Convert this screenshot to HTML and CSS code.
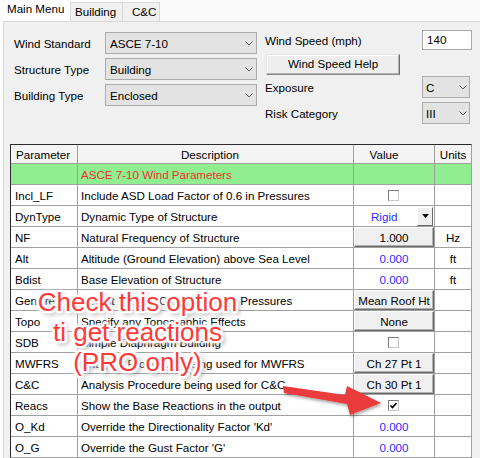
FILE: index.html
```html
<!DOCTYPE html>
<html>
<head>
<meta charset="utf-8">
<link rel="stylesheet" href="styles.css">
</head>
<body>
<div class="tabs">
  <div class="tab active">Main Menu</div>
  <div class="tab tab-b">Building</div>
  <div class="tab tab-c">C&amp;C</div>
</div>
<div class="panel">
  <div class="form">
    <div class="form-left">
      <div class="frow"><span class="flabel">Wind Standard</span><div class="combo wide"><span>ASCE 7-10</span><svg class="chev" width="8" height="5" viewBox="0 0 8 5"><polyline points="0.5,0.5 4,4 7.5,0.5" fill="none" stroke="#606060" stroke-width="1"/></svg></div></div>
      <div class="frow"><span class="flabel">Structure Type</span><div class="combo wide"><span>Building</span><svg class="chev" width="8" height="5" viewBox="0 0 8 5"><polyline points="0.5,0.5 4,4 7.5,0.5" fill="none" stroke="#606060" stroke-width="1"/></svg></div></div>
      <div class="frow"><span class="flabel">Building Type</span><div class="combo wide"><span>Enclosed</span><svg class="chev" width="8" height="5" viewBox="0 0 8 5"><polyline points="0.5,0.5 4,4 7.5,0.5" fill="none" stroke="#606060" stroke-width="1"/></svg></div></div>
    </div>
    <div class="form-right">
      <div class="rrow r1"><span>Wind Speed (mph)</span><div class="textbox">140</div></div>
      <div class="rrow r2"><div class="btn help">Wind Speed Help</div></div>
      <div class="rrow r3"><span>Exposure</span><div class="combo small"><span>C</span><svg class="chev" width="8" height="5" viewBox="0 0 8 5"><polyline points="0.5,0.5 4,4 7.5,0.5" fill="none" stroke="#606060" stroke-width="1"/></svg></div></div>
      <div class="rrow r4"><span>Risk Category</span><div class="combo small"><span>III</span><svg class="chev" width="8" height="5" viewBox="0 0 8 5"><polyline points="0.5,0.5 4,4 7.5,0.5" fill="none" stroke="#606060" stroke-width="1"/></svg></div></div>
    </div>
  </div>

  <div class="grid">
    <div class="c hd">Parameter</div>
    <div class="c hd hd-desc">Description</div>
    <div class="c hd hd-val">Value</div>
    <div class="c hd hd-units">Units</div>

    <div class="c green"></div>
    <div class="c green red">ASCE 7-10 Wind Parameters</div>
    <div class="c green"></div>
    <div class="c green"></div>

    <div class="c">Incl_LF</div>
    <div class="c">Include ASD Load Factor of 0.6 in Pressures</div>
    <div class="c center"><span class="cb"></span></div>
    <div class="c"></div>

    <div class="c">DynType</div>
    <div class="c">Dynamic Type of Structure</div>
    <div class="c rigid"><span class="blue">Rigid</span><span class="dd"><svg width="7" height="4" viewBox="0 0 7 4"><polygon points="0,0 7,0 3.5,4" fill="#000"/></svg></span></div>
    <div class="c"></div>

    <div class="c">NF</div>
    <div class="c">Natural Frequency of Structure</div>
    <div class="c pad0"><div class="vb">1.000</div></div>
    <div class="c center">Hz</div>

    <div class="c">Alt</div>
    <div class="c">Altitude (Ground Elevation) above Sea Level</div>
    <div class="c center blue">0.000</div>
    <div class="c center">ft</div>

    <div class="c">Bdist</div>
    <div class="c">Base Elevation of Structure</div>
    <div class="c center blue">0.000</div>
    <div class="c center">ft</div>

    <div class="c">GenPres</div>
    <div class="c">Height used to Calculate Wind Pressures</div>
    <div class="c pad0"><div class="vb">Mean Roof Ht</div></div>
    <div class="c"></div>

    <div class="c">Topo</div>
    <div class="c">Specify any Topographic Effects</div>
    <div class="c pad0"><div class="vb">None</div></div>
    <div class="c"></div>

    <div class="c">SDB</div>
    <div class="c">Simple Diaphragm Building</div>
    <div class="c center"><span class="cb"></span></div>
    <div class="c"></div>

    <div class="c">MWFRS</div>
    <div class="c">Analysis Procedure being used for MWFRS</div>
    <div class="c pad0"><div class="vb">Ch 27 Pt 1</div></div>
    <div class="c"></div>

    <div class="c">C&amp;C</div>
    <div class="c">Analysis Procedure being used for C&amp;C</div>
    <div class="c pad0"><div class="vb">Ch 30 Pt 1</div></div>
    <div class="c"></div>

    <div class="c">Reacs</div>
    <div class="c">Show the Base Reactions in the output</div>
    <div class="c center"><span class="cb"><svg width="9" height="9" viewBox="0 0 9 9"><polyline points="1.5,4.5 3.5,6.5 7.5,2" fill="none" stroke="#000" stroke-width="1.6"/></svg></span></div>
    <div class="c"></div>

    <div class="c">O_Kd</div>
    <div class="c">Override the Directionality Factor 'Kd'</div>
    <div class="c center blue">0.000</div>
    <div class="c"></div>

    <div class="c">O_G</div>
    <div class="c">Override the Gust Factor 'G'</div>
    <div class="c center blue">0.000</div>
    <div class="c"></div>
  </div>
</div>

<div class="callout">Check this option<br>ti get reactions<br>(PRO only)</div>

<svg class="arrow" width="480" height="458" viewBox="0 0 480 458">
  <defs>
    <filter id="sh" x="-10%" y="-30%" width="130%" height="170%">
      <feDropShadow dx="1" dy="2" stdDeviation="1.5" flood-color="#000" flood-opacity="0.35"/>
    </filter>
  </defs>
  <polygon points="283,386 345,395 347,386 381,403 350,415 347,404 284,393" fill="#ea3a3c" filter="url(#sh)"/>
</svg>
</body>
</html>
```

FILE: styles.css
```css
* { box-sizing: border-box; }
html, body { margin: 0; padding: 0; }
body {
  width: 480px;
  height: 458px;
  overflow: hidden;
  position: relative;
  background: #ffffff;
  font-family: "Liberation Sans", Arial, sans-serif;
  font-size: 11.6px;
  color: #000;
}

/* tabs */
.tabs {
  display: flex;
  height: 21px;
  background: #fafafa;
}
.tab {
  height: 19px;
  margin-top: 2px;
  background: #f0f0f0;
  border: 1px solid #d9d9d9;
  border-bottom: none;
  line-height: 17px;
  white-space: nowrap;
}
.tab.active {
  width: 70px;
  height: 21px;
  margin-top: 0;
  border: none;
  background: #ffffff;
  padding-left: 7px;
  line-height: 18px;
}
.tab-b { width: 53px; padding-left: 4px; }
.tab-c { width: 37px; padding-left: 9px; border-left: none; }

/* panel */
.panel {
  margin-left: 3px;
  height: 437px;
  background: #f0f0f0;
  border-top: 1px solid #d9d9d9;
  border-left: 1px solid #d9d9d9;
}
.form {
  display: flex;
  height: 122px;
}
.form-left {
  width: 253px;
  padding-left: 10px;
  padding-top: 10px;
  display: flex;
  flex-direction: column;
  gap: 4px;
}
.frow {
  display: flex;
  align-items: center;
  height: 22px;
}
.flabel { width: 91px; }
.combo {
  height: 22px;
  background: #e3e3e3;
  border: 1px solid #acacac;
  display: flex;
  align-items: center;
  justify-content: space-between;
}
.combo.wide { width: 152px; padding: 0 3px 0 4px; }
.combo.small { width: 48px; padding: 0 2px 0 3px; margin-left: auto; margin-right: 2px; }
.chev { display: block; }

.form-right {
  width: 207px;
  margin-left: 8px;
  padding-top: 8px;
}
.rrow { display: flex; align-items: center; }
.r1 { height: 20px; }
.r2 { height: 21px; margin-top: 4px; }
.r3 { height: 22px; margin-top: 1px; }
.r4 { height: 22px; margin-top: 4px; }
.textbox {
  margin-left: auto;
  width: 50px;
  height: 20px;
  background: #ffffff;
  border: 1px solid #a9a9a9;
  padding-left: 4px;
  line-height: 18px;
}
.btn.help {
  margin-left: 1px;
  width: 134px;
  height: 21px;
  background: #eeeeee;
  border: 1px solid;
  border-color: #e3e3e3 #6e6e6e #8a8a8a #e3e3e3;
  box-shadow: inset -1px -1px 0 #b4b4b4, inset 1px 1px 0 #ffffff;
  text-align: center;
  line-height: 18px;
}

/* grid */
.grid {
  margin-left: 6px;
  width: 462px;
  display: grid;
  grid-template-columns: 66px 275px 80px 36px;
  grid-template-rows: 18px repeat(14, 20px);
  gap: 1px;
  background: #a0a0a0;
  border: 1px solid #a0a0a0;
  border-top-color: #2a2a2a;
  border-left-color: #2a2a2a;
}
.c {
  background: #ffffff;
  display: flex;
  align-items: center;
  padding-left: 4px;
  white-space: nowrap;
  overflow: hidden;
}
.hd { background: #f4f4f4; padding-left: 5px; }
.hd-desc, .hd-val, .hd-units { justify-content: center; padding-left: 0; }
.hd-desc { padding-right: 14px; }
.hd-val { padding-right: 20px; }
.green { background: #90ee90; }
.red { color: #f03030; padding-left: 3px; }
.c:nth-child(4n+2) { padding-left: 3px; }
.center { justify-content: center; padding-left: 0; }
.c.center { padding-left: 0; }
.blue { color: #2a2aff; }
.pad0 { padding: 0; }
.vb {
  width: 100%;
  height: 100%;
  background: #f0f0f0;
  border: 1px solid;
  border-color: #ffffff #6a6a6a #6a6a6a #ffffff;
  box-shadow: inset -1px -1px 0 #b0b0b0;
  display: flex;
  align-items: center;
  justify-content: center;
}
.cb {
  width: 11px;
  height: 11px;
  background: #ffffff;
  border: 1px solid;
  border-color: #7a7a7a #c8c8c8 #c8c8c8 #7a7a7a;
  margin-right: 2px;
  display: flex;
  align-items: center;
  justify-content: center;
}
.cb svg { display: block; }
.rigid { padding-left: 17px; }
.dd {
  margin-left: auto;
  margin-right: 1px;
  width: 16px;
  height: 19px;
  background: #f0f0f0;
  border: 1px solid;
  border-color: #ffffff #6a6a6a #6a6a6a #ffffff;
  display: flex;
  align-items: center;
  justify-content: center;
}
.dd svg { display: block; }

/* overlay callout */
.callout {
  position: absolute;
  left: 0;
  top: 287px;
  width: 275px;
  text-align: center;
  font-family: "Liberation Sans", Arial, sans-serif;
  font-size: 26px;
  line-height: 30px;
  color: #ff3a3a;
  white-space: nowrap;
  text-shadow:
    1px 0 0 #fff, -1px 0 0 #fff, 0 1px 0 #fff, 0 -1px 0 #fff,
    1px 1px 0 #fff, -1px -1px 0 #fff, 1px -1px 0 #fff, -1px 1px 0 #fff,
    2px 0 0 #fff, -2px 0 0 #fff, 0 2px 0 #fff, 0 -2px 0 #fff,
    2px 2px 1px #fff, -2px -2px 1px #fff, 2px -2px 1px #fff, -2px 2px 1px #fff,
    0 0 4px #fff, 0 0 4px #fff, 0 0 5px #fff, 0 0 6px #fff, 0 0 6px #fff,
    3px 3px 5px rgba(0, 0, 0, 0.6);
}
.arrow {
  position: absolute;
  left: 0;
  top: 0;
  pointer-events: none;
}
```
